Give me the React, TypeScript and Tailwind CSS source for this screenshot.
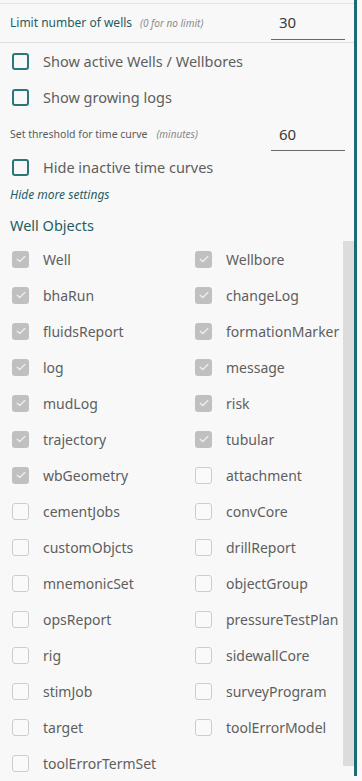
import React from "react";

const left = [
  ["Well", true], ["bhaRun", true], ["fluidsReport", true], ["log", true], ["mudLog", true],
  ["trajectory", true], ["wbGeometry", true], ["cementJobs", false], ["customObjcts", false],
  ["mnemonicSet", false], ["opsReport", false], ["rig", false], ["stimJob", false], ["target", false],
  ["toolErrorTermSet", false],
] as const;
const right = [
  ["Wellbore", true], ["changeLog", true], ["formationMarker", true], ["message", true], ["risk", true],
  ["tubular", true], ["attachment", false], ["convCore", false], ["drillReport", false],
  ["objectGroup", false], ["pressureTestPlan", false], ["sidewallCore", false], ["surveyProgram", false],
  ["toolErrorModel", false],
] as const;

function GrayBox({ checked }: { checked: boolean }) {
  if (checked)
    return (
      <span className="flex h-[17px] w-[17px] shrink-0 items-center justify-center rounded-[3px] bg-[#c0c0c0]">
        <svg width="12" height="12" viewBox="0 0 12 12" fill="none">
          <path d="M2.2 6.2 L4.8 8.6 L9.8 3.4" stroke="#ececec" strokeWidth="1.4" strokeLinecap="round" strokeLinejoin="round" />
        </svg>
      </span>
    );
  return <span className="h-[17px] w-[17px] shrink-0 rounded-[3px] border-[1.5px] border-[#cdcdcd] bg-[#fafafa]" />;
}

function TealBox() {
  return <span className="h-[17px] w-[17px] shrink-0 rounded-[3px] border-2 border-[#2a7679]" />;
}

function Item({ label, checked }: { label: string; checked: boolean }) {
  return (
    <div className="flex h-[36px] items-center pl-[12px]">
      <GrayBox checked={checked} />
      <span className="ml-[14px] whitespace-nowrap text-[14px] text-[#5e5e5e]">{label}</span>
    </div>
  );
}

export default function App() {
  return (
    <div
      className="relative h-[781px] w-[362px] overflow-hidden bg-[#f8f8f8]"
      style={{ fontFamily: "'Noto Sans', 'Open Sans', sans-serif" }}
    >
      <div className="flex h-full">
        <div className="flex w-[354px] flex-col">
          <div className="mt-[3px] border-t border-[#e2e2e2]" />
          <div className="flex h-[42px] items-center justify-between border-b border-[#dedede] pl-[10px] pr-[9px]">
            <div className="flex items-baseline gap-[8px]">
              <span className="text-[12px] text-[#1f5d63]">Limit number of wells</span>
              <span className="text-[10px] italic text-[#8a8a8a]">(0 for no limit)</span>
            </div>
            <div className="flex h-[33px] w-[74px] items-center border-b border-[#6a6a6a] pl-[8px] text-[15px] text-[#3a3a3a]">
              30
            </div>
          </div>
          <div className="flex h-[38px] items-center gap-[14px] pl-[12px] pt-[2px]">
            <TealBox />
            <span className="text-[14.5px] text-[#5e5e5e]">Show active Wells / Wellbores</span>
          </div>
          <div className="flex h-[41px] items-center gap-[14px] pl-[12px]">
            <TealBox />
            <span className="text-[14.5px] text-[#5e5e5e]">Show growing logs</span>
          </div>
          <div className="flex h-[39px] items-center justify-between pl-[10px] pr-[9px]">
            <div className="flex items-baseline gap-[9px]">
              <span className="text-[10.5px] text-[#5a5a5a]">Set threshold for time curve</span>
              <span className="text-[10px] italic text-[#8a8a8a]">(minutes)</span>
            </div>
            <div className="flex h-[33px] w-[74px] items-center border-b border-[#6a6a6a] pl-[8px] text-[15px] text-[#3a3a3a]">
              60
            </div>
          </div>
          <div className="flex h-[32px] items-center gap-[14px] pl-[12px]">
            <TealBox />
            <span className="text-[14.5px] text-[#5e5e5e]">Hide inactive time curves</span>
          </div>
          <div className="flex h-[31px] items-center pl-[10px] pb-[4px] text-[12px] italic text-[#1f5d63]">Hide more settings</div>
          <div className="flex h-[32px] items-center pl-[10px] pb-[1px] text-[14.5px] text-[#1f5d63]">Well Objects</div>
          <div className="flex">
            <div className="flex w-[183px] flex-col">
              {left.map(([l, c]) => (
                <Item key={l} label={l} checked={c} />
              ))}
            </div>
            <div className="flex flex-1 flex-col">
              {right.map(([l, c]) => (
                <Item key={l} label={l} checked={c} />
              ))}
            </div>
          </div>
        </div>
      </div>
      <div className="absolute left-[343px] top-[241px] h-[525px] w-[11px] bg-[#dcdcdc]" />
      <div className="absolute left-[354px] top-0 h-[776px] w-[3px] bg-[#1b6b70]" />
    </div>
  );
}
